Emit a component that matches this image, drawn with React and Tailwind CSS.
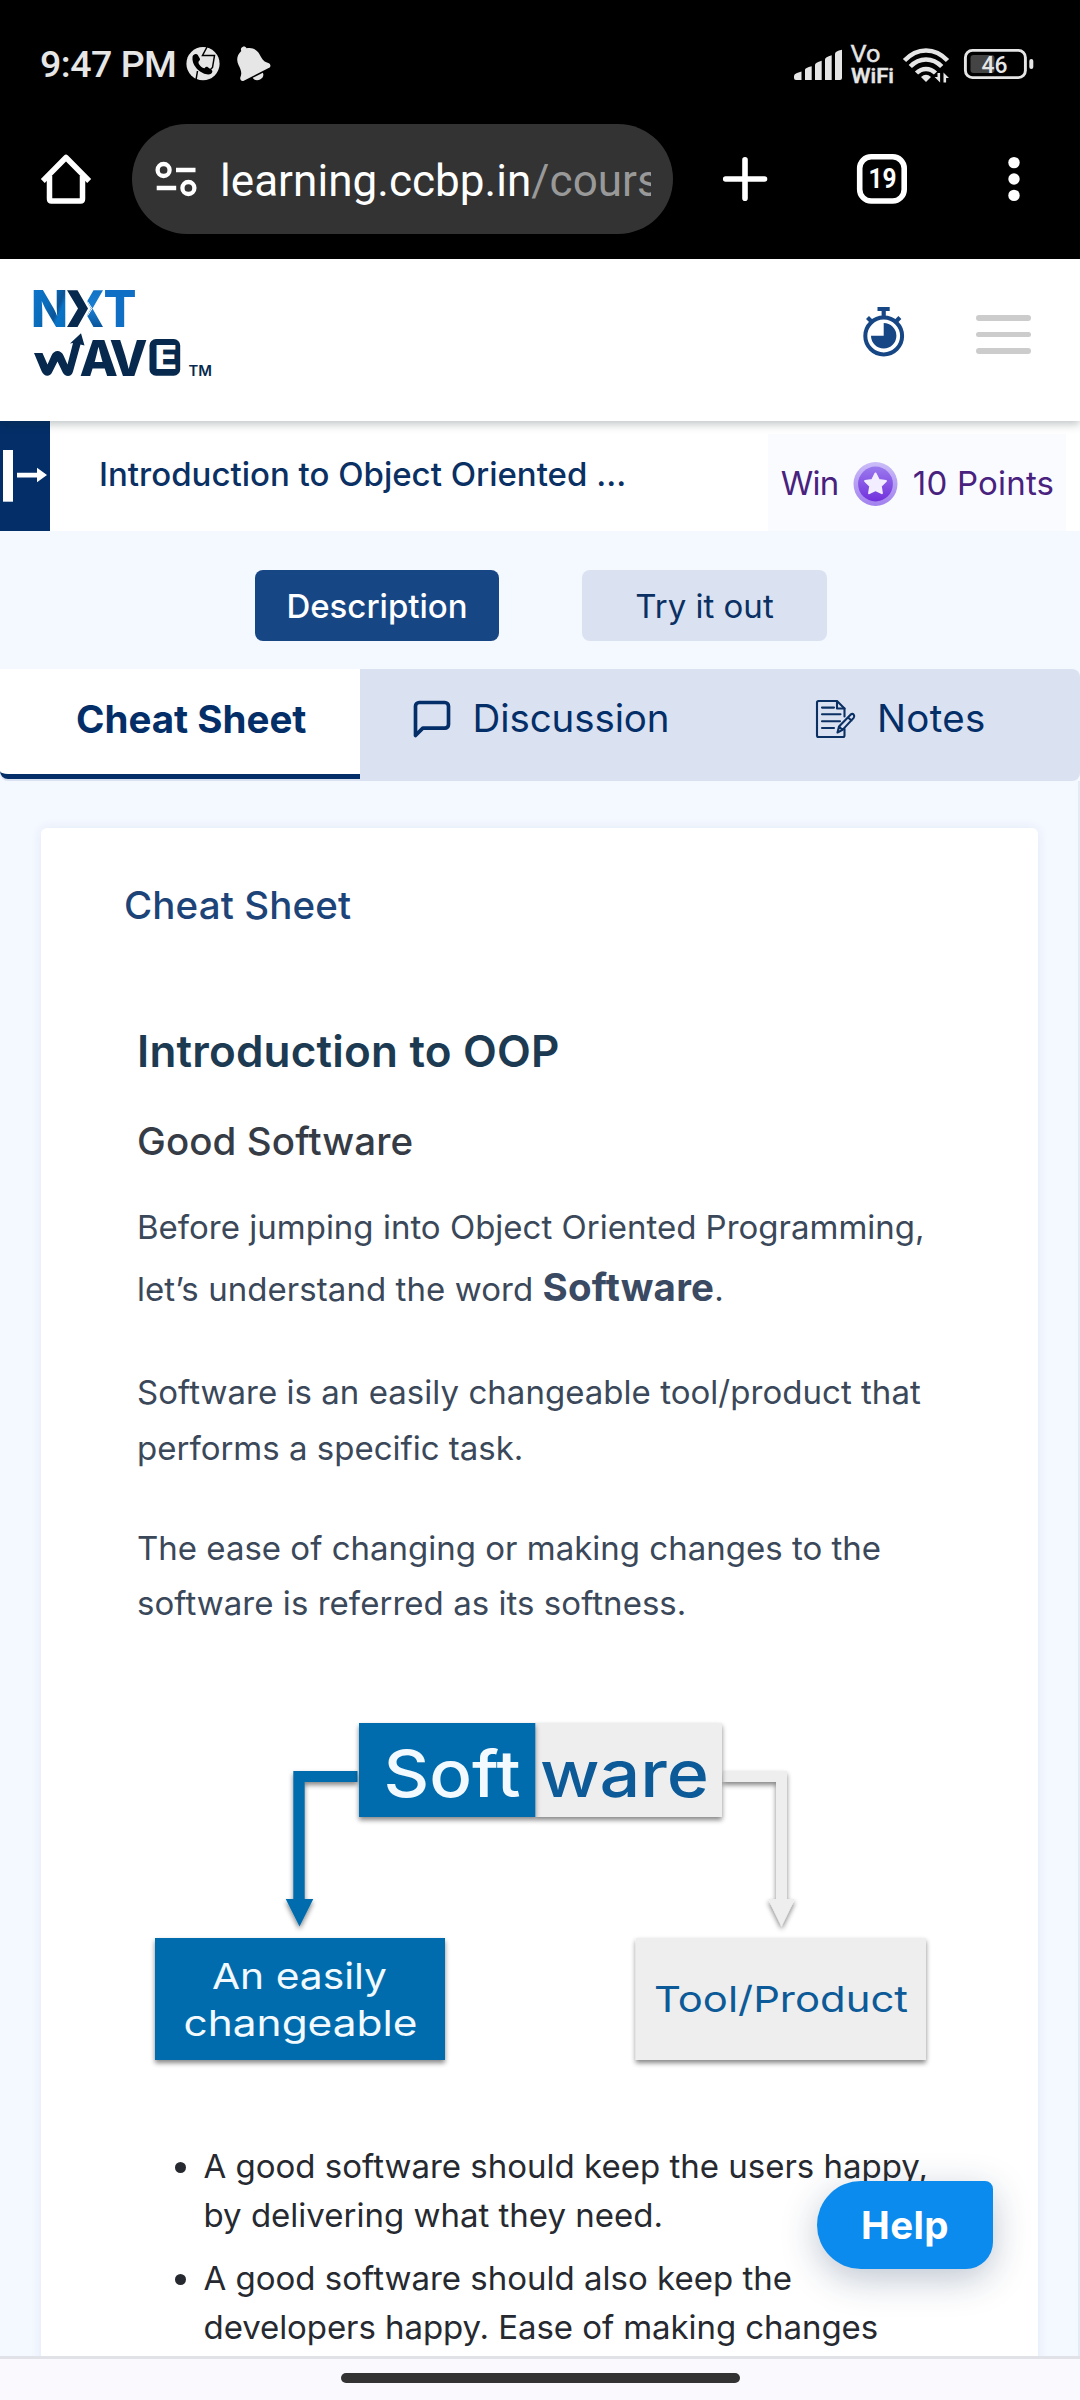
import React from "react";

function StatusBar() {
  return (
    <div className="flex h-[124px] items-start justify-between pt-[38px] pl-[40px] pr-[46px] text-[#e6e6e6]">
      <div className="flex h-[50px] items-center">
        <span className="w-[146px] whitespace-nowrap pt-[2px] text-[37.5px] font-medium leading-[50px] tracking-[-0.5px]">9:47 PM</span>
        <svg width="90" height="50" viewBox="186 38 90 50">
          <circle cx="203" cy="63.700" r="16.600" fill="#e6e6e6" />
          <path d="M207 47l-4.500 8.500h12l-2 12-3.500 3.500" fill="none" stroke="#000" strokeWidth="1.500" />
          <path d="M197.500 71l-1.500 9" stroke="#000" strokeWidth="1.500" />
          <path d="M193.500 55c1.500-1.500 3.500-1.300 4.300 0l2 3.600c.6 1.200-.1 2-1.300 3.200-.5 2.500 3.200 6.300 6 6.500 1.300-1.500 2.200-1.800 3.400-1l3.700 2.600c1.200 1 1 2.600-.5 3.800-5.500 3.500-19.500-5.500-18.600-16.200 0-1 .2-1.800 1-2.500z" fill="#000" />
          <g transform="translate(251 63.500) rotate(-27) scale(.98)" fill="#e6e6e6">
            <path d="M0-19c1.900 0 3 1.300 3 3.100C8.600-14.500 12-10 12-4.500c0 7 1 9.500 4 12 1.800 1.700 1 4.800-1.500 4.800h-29c-2.500 0-3.300-3.100-1.500-4.800 3-2.500 4-5 4-12 0-5.500 3.400-10 9-11.400C-3-17.700-1.900-19 0-19z" />
            <path d="M-5 13.800H6.500c0 3-2.500 5-5.700 5S-5 16.800-5 13.800z" />
          </g>
        </svg>
      </div>
      <svg className="overflow-visible" width="242" height="50" viewBox="792 38 242 50" fill="#e6e6e6">
        <path d="M794 76q0-2 3-3l4.500-1.500V80H796q-2 0-2-2zM805 69.700q0-2 6.700-3.500V80H805zM815 65q0-2.500 6.700-4.200V80H815zM825 59.500q0-2.500 6.700-4.200V80H825zM835 54q0-3 7-4.200V78q0 2-2 2h-5z" />
        <text x="850.500" y="62" fontSize="23.500" fontWeight="400" textLength="30" lengthAdjust="spacingAndGlyphs" stroke="#e6e6e6" strokeWidth=".4">Vo</text>
        <text x="851" y="83" fontSize="21" fontWeight="500" textLength="43" lengthAdjust="spacingAndGlyphs" stroke="#e6e6e6" strokeWidth=".5">WiFi</text>
        <g fill="none" stroke="#e6e6e6" strokeWidth="4.500">
          <path d="M904.500 60.500c12.500-13.500 30.500-13.500 43 0" />
          <path d="M910.300 66.500c9-9.500 22.400-9.500 31.400 0" />
          <path d="M916.500 73c5.500-5.500 13.500-5.500 19 0" />
        </g>
        <path d="M921 77q5-4.500 10 0l-5 5z" />
        <path d="M937.500 73h2.600v9.500l-5.500-5.500h2.900zM943.500 82.500h2.600V78h2.900l-5.500-5.500z" />
        <rect x="965.400" y="50.400" width="60" height="27.200" rx="7" fill="none" stroke="#e6e6e6" strokeWidth="2.900" />
        <rect x="970.500" y="55" width="24" height="18" rx="3" fill="#444" />
        <rect x="1029.300" y="59" width="4" height="10" rx="2" />
        <text x="981.500" y="73" fontSize="23.500" fontWeight="500" textLength="26" lengthAdjust="spacingAndGlyphs">46</text>
      </svg>
    </div>
  );
}

function BrowserBar() {
  return (
    <div className="flex h-[135px] items-start">
      <svg className="mt-[20px] ml-[36px]" width="60" height="70" viewBox="36 144 60 70" fill="none" stroke="#fff" strokeWidth="5.500" strokeLinejoin="round">
        <path d="M42.800 181l23.200-23.500L89.200 181" />
        <path d="M49.500 176v22.900q0 2 2 2h29q2 0 2-2V176" />
      </svg>
      <div className="ml-[36px] flex h-[110px] w-[541px] items-center rounded-full bg-[#333] pl-[22px]">
        <svg width="46" height="44" viewBox="154 157 46 44" fill="none" stroke="#fff" strokeWidth="4.300">
          <circle cx="163.600" cy="170" r="6" />
          <path d="M176 170h19.500M156.700 188h19.500" />
          <circle cx="188.400" cy="188" r="6" />
        </svg>
        <div className="ml-[20px] mt-[3px] w-[431px] overflow-hidden whitespace-nowrap text-[44px] leading-[60px] tracking-[0.05px] text-white">
          learning.ccbp.in<span className="text-[#999]">/course</span>
        </div>
      </div>
      <svg className="ml-[40px]" width="326" height="110" viewBox="713 124 326 110">
        <path d="M745 159.800v38.400M725.700 179H764.500" stroke="#fff" strokeWidth="5.600" strokeLinecap="round" />
        <rect x="859.700" y="156.800" width="44.500" height="44.200" rx="11.500" fill="none" stroke="#fff" strokeWidth="5.600" />
        <text x="868.500" y="187.700" fontSize="27" fontWeight="700" fill="#fff" textLength="28" lengthAdjust="spacingAndGlyphs">19</text>
        <g fill="#fff">
          <circle cx="1014" cy="162.600" r="5.700" />
          <circle cx="1014" cy="179" r="5.700" />
          <circle cx="1014" cy="195.400" r="5.700" />
        </g>
      </svg>
    </div>
  );
}

function Logo() {
  return (
    <svg width="184" height="100" viewBox="32 283 184 100" className="overflow-visible font-[Inter]">
      <defs>
        <linearGradient id="n" x1="0" y1=".2" x2="1" y2=".9">
          <stop offset="0" stopColor="#0f76cd" />
          <stop offset=".4" stopColor="#0a6cba" />
          <stop offset=".62" stopColor="#0b5396" />
          <stop offset=".7" stopColor="#0873c6" />
          <stop offset="1" stopColor="#0a6cba" />
        </linearGradient>
        <linearGradient id="x" x1="0" y1="0" x2="0" y2="1">
          <stop offset="0" stopColor="#1173c6" />
          <stop offset=".5" stopColor="#1a7fd2" />
          <stop offset="1" stopColor="#0a559b" />
        </linearGradient>
      </defs>
      <text x="31" y="327" fontSize="50.500" fontWeight="800" fill="url(#n)" textLength="37" lengthAdjust="spacingAndGlyphs">N</text>
      <path d="M67 290.200h10.500L88 308.600l-10.500 18.400H67l11-18.400z" fill="#06294d" />
      <path d="M93.500 290.200H103l-10.500 18.400L103 327h-9.500L87 315.600l4-7-4-7z" fill="url(#x)" />
      <path d="M87.500 301.500l4.500 7.100-4.500 7.100" fill="none" stroke="#fff" strokeWidth="1" />
      <text x="103.500" y="327" fontSize="50.500" fontWeight="800" fill="#0e6fc4" textLength="33" lengthAdjust="spacingAndGlyphs">T</text>
      <path d="M34 353h8.500l5 11.500 4-9c2.500-6 9.500-6 12 0l4 9 5.500-21.500-3 .5 11-10.200 3.500 12.200-4-1-7.500 27c-1.500 6-8 6-10.500.5l-5-10.500-5 10c-2.500 6-8.500 5.500-11-.5z" fill="#06294d" />
      <text x="79.500" y="375.500" fontSize="50" fontWeight="800" fill="#06294d" textLength="38.500" lengthAdjust="spacingAndGlyphs">A</text>
      <text x="109.500" y="375.500" fontSize="50" fontWeight="800" fill="#06294d" textLength="38" lengthAdjust="spacingAndGlyphs">V</text>
      <rect x="149.500" y="339" width="30.700" height="36.700" rx="6.500" fill="#06294d" />
      <text x="154.500" y="369" fontSize="32" fontWeight="800" fill="#fff" textLength="22.500" lengthAdjust="spacingAndGlyphs">E</text>
      <text x="188.500" y="375.500" fontSize="14.300" fontWeight="600" fill="#06294d" textLength="23.500" lengthAdjust="spacingAndGlyphs">TM</text>
    </svg>
  );
}

function SiteHeader() {
  return (
    <header className="relative z-10 flex h-[162px] items-start bg-white shadow-[0_3px_9px_rgba(20,40,40,0.28)]">
      <div className="ml-[32px] mt-[24px]">
        <Logo />
      </div>
      <svg className="ml-auto mr-[69px] mt-[44px]" width="46" height="58" viewBox="861 303 46 58">
        <circle cx="883.700" cy="336" r="18.400" fill="none" stroke="#174685" strokeWidth="4" />
        <path d="M883.700 323a12.700 12.700 0 1 1-12.700 12.700h12.700z" fill="#174685" />
        <path d="M877.500 309h12.200M883.700 309v8M867.500 317.500l4.500 4.500M899.900 317.500l-4.500 4.500" fill="none" stroke="#174685" strokeWidth="4.200" />
      </svg>
      <div className="mr-[49px] mt-[56px] flex w-[55px] flex-col gap-[11px]">
        <div className="h-[5.500px] rounded-full bg-[#ccc]" />
        <div className="h-[5.500px] rounded-full bg-[#ccc]" />
        <div className="h-[5.500px] rounded-full bg-[#ccc]" />
      </div>
    </header>
  );
}

function StarBadge() {
  return (
    <svg className="mx-[15px]" width="45" height="46" viewBox="-22.500 -23 45 46">
      <defs>
        <linearGradient id="ring" x1="0" y1="0" x2="0" y2="1">
          <stop offset="0" stopColor="#cbbdf8" />
          <stop offset="1" stopColor="#a281ee" />
        </linearGradient>
        <linearGradient id="core" x1="0" y1="0" x2="0" y2="1">
          <stop offset="0" stopColor="#9a79ee" />
          <stop offset="1" stopColor="#7230dc" />
        </linearGradient>
      </defs>
      <circle r="22" fill="url(#ring)" />
      <circle r="17.400" fill="url(#core)" />
      <path d="M0-10.500l3.300 6.400 7.100 1.100-5.100 5.100 1.100 7.100L0 6l-6.400 3.200 1.100-7.100-5.100-5.100 7.100-1.100z" fill="#f3eeff" stroke="#f3eeff" strokeWidth="2" strokeLinejoin="round" />
    </svg>
  );
}

function LessonBar() {
  return (
    <div className="flex h-[110px] bg-white">
      <div className="w-[50px] shrink-0 bg-[#032e68]">
        <svg width="50" height="110" viewBox="0 421 50 110" fill="#fff">
          <rect x="3" y="450" width="10" height="51.700" />
          <path d="M17 472.700h20v-4.900l10 7.200-10 7.200v-4.700H17z" />
        </svg>
      </div>
      <div className="ml-[49px] mt-[29px] w-[560px] whitespace-nowrap text-[33px] font-medium leading-[49px] text-[#0b3063]">
        Introduction to Object Oriented ...
      </div>
      <div className="ml-auto mr-[14px] mt-[13px] flex h-[97px] w-[298px] items-center justify-center bg-[#fafbff] pl-[1px] pt-[2px] text-[33px] leading-[49px] text-[#48227e]">
        <span className="w-[57px] tracking-[-0.8px]">Win</span>
        <StarBadge />
        <span className="whitespace-nowrap tracking-[0.2px]">10 Points</span>
      </div>
    </div>
  );
}

function ModeButtons() {
  return (
    <div className="flex h-[138px] items-start pl-[255px] gap-[83px] pt-[39px] text-[33px] leading-[70px]">
      <button className="h-[71px] w-[244px] rounded-lg bg-[#174685] font-medium text-white">Description</button>
      <button className="h-[71px] w-[245px] rounded-lg bg-[#dae1f0] text-[#0b3063]">Try it out</button>
    </div>
  );
}

function NotesIcon() {
  return (
    <svg width="42" height="44" viewBox="815 703 42 44" fill="none" stroke="#0b3063" strokeWidth="2.100" strokeLinejoin="round" strokeLinecap="round">
      <path d="M844.500 734v6.500q0 1.500-1.500 1.500h-24.500q-1.500 0-1.500-1.500v-33q0-1.500 1.500-1.500h18.500l7.500 7.500v8" />
      <path d="M837 706.500v7h7.500" />
      <path d="M822 712.600h12M822 719.300h18.500M822 726.300h18M822 733h12" />
      <path d="M837.500 737.500l1.500-6 11.500-11.800q2-1.500 3.200 0 1.200 1.500 0 3.200l-11.200 12zM839 731.500l3.500 3.500M848 722.500l3.500 3" />
    </svg>
  );
}

function Tabs() {
  return (
    <div className="flex h-[112px] overflow-hidden rounded-r-lg rounded-bl-lg bg-[#dae1f0] text-[38.5px] leading-[58px] text-[#032e68]">
      <div className="h-[110px] w-[360px] rounded-bl-lg border-b-[5px] border-[#032e68] bg-white pl-[76px] pt-[21px] font-bold">Cheat Sheet</div>
      <div className="flex w-[360px] items-start pl-[50px] pt-[20px]">
        <svg className="mt-[8px]" width="44" height="44" viewBox="0 0 24 24" fill="none" stroke="currentColor" strokeWidth="2" strokeLinecap="round" strokeLinejoin="round">
          <path d="M21 15a2 2 0 0 1-2 2H7l-4 4V5a2 2 0 0 1 2-2h14a2 2 0 0 1 2 2z" />
        </svg>
        <span className="ml-[18.500px] tracking-[-0.1px]">Discussion</span>
      </div>
      <div className="flex w-[360px] items-start pl-[95px] pt-[20px]">
        <div className="mt-[9px]">
          <NotesIcon />
        </div>
        <span className="ml-[20px] tracking-[0.3px]">Notes</span>
      </div>
    </div>
  );
}

function SoftwareDiagram() {
  return (
    <svg className="-ml-px mt-[68px] block" width="820" height="380" viewBox="136 1700 820 380">
      <defs>
        <filter id="drop" x="-10%" y="-10%" width="120%" height="130%">
          <feDropShadow dx="0" dy="3" stdDeviation="2.800" floodColor="#000" floodOpacity=".48" />
        </filter>
      </defs>
      <path d="M357.500 1771H293.300V1899H285.700L299.500 1926.500 313.300 1899H304.700V1782H357.500z" fill="#026cad" filter="url(#drop)" />
      <path d="M722.700 1771H787V1899H795L781.500 1926.500 768 1899H776V1782H722.700z" fill="#eee" filter="url(#drop)" />
      <rect x="535" y="1723" width="187" height="94" fill="#eee" filter="url(#drop)" />
      <rect x="359" y="1723" width="176.300" height="94" fill="#026cad" filter="url(#drop)" />
      <rect x="155" y="1938" width="290" height="122" fill="#026cad" filter="url(#drop)" />
      <rect x="635.700" y="1938" width="290.300" height="122" fill="#eee" filter="url(#drop)" />
      <text x="383.500" y="1797.300" fontSize="65" fontWeight="500" fill="#f2faff" textLength="137" lengthAdjust="spacingAndGlyphs">Soft</text>
      <text x="540" y="1797.300" fontSize="65" fontWeight="500" fill="#0d5a98" textLength="169" lengthAdjust="spacingAndGlyphs">ware</text>
      <text x="212" y="1989.300" fontSize="36" fill="#f2faff" textLength="175" lengthAdjust="spacingAndGlyphs">An easily</text>
      <text x="183.500" y="2036" fontSize="36" fill="#f2faff" textLength="234" lengthAdjust="spacingAndGlyphs">changeable</text>
      <text x="654" y="2012.300" fontSize="36" fill="#0d5a98" textLength="254" lengthAdjust="spacingAndGlyphs">Tool/Product</text>
    </svg>
  );
}

function Bullet({ children }) {
  return (
    <li className="flex">
      <span className="mr-[18px] mt-[20.500px] size-[10.500px] shrink-0 rounded-full bg-[#262a30]" />
      <span className="whitespace-nowrap">{children}</span>
    </li>
  );
}

function CheatSheetCard() {
  return (
    <div className="ml-[41px] mr-[40px] mt-[47px] h-[1570px] rounded-md bg-white pt-[48px] shadow-[0_0_12px_rgba(30,60,140,0.08)]">
      <div className="pl-[83px] text-[38.5px] font-medium leading-[58px] tracking-[0.1px] text-[#1d4478]">Cheat Sheet</div>
      <div className="pl-[96px]">
        <h1 className="mt-[84px] text-[44px] font-semibold leading-[66px] tracking-[0.2px] text-[#1c3b52]">Introduction to OOP</h1>
        <h2 className="mt-[28px] text-[38.5px] font-medium leading-[58px] tracking-[0.1px] text-[#363c46]">Good Software</h2>
        <div className="mt-[30px] flex flex-col gap-[45px] whitespace-nowrap text-[33px] leading-[1.68] text-[#3a485a]">
          <p>
            Before jumping into Object Oriented Programming,
            <br />
            <span className="tracking-[0.06px]">let’s understand the word</span>{" "}
            <strong className="text-[38.5px] font-bold tracking-[0.2px] text-[#3a4a62]">Software</strong>.
          </p>
          <p>
            <span className="tracking-[0.03px]">Software is an easily changeable tool/product that</span>
            <br />
            performs a specific task.
          </p>
          <p>
            The ease of changing or making changes to the
            <br />
            <span className="tracking-[0.04px]">software is referred as its softness.</span>
          </p>
        </div>
        <SoftwareDiagram />
        <ul className="ml-[38px] mt-[62px] flex flex-col gap-[13px] text-[33px] leading-[49.5px] text-[#262a30]">
          <Bullet>
            A good software should keep the users happy,
            <br />
            by delivering what they need.
          </Bullet>
          <Bullet>
            A good software should also keep the
            <br />
            <span className="tracking-[-0.07px]">developers happy. Ease of making changes</span>
          </Bullet>
        </ul>
      </div>
    </div>
  );
}

export default function App() {
  return (
    <div className="relative flex h-[2400px] w-[1080px] flex-col overflow-hidden bg-[#f4f8ff] font-[Inter,sans-serif]">
      <div className="h-[259px] shrink-0 bg-black font-[Roboto,sans-serif]">
        <StatusBar />
        <BrowserBar />
      </div>
      <div className="h-[2097px] shrink-0 overflow-hidden">
        <SiteHeader />
        <LessonBar />
        <ModeButtons />
        <Tabs />
        <div className="h-[1575px] overflow-hidden border-r-2 border-[#e3ebf7]">
          <CheatSheetCard />
        </div>
      </div>
      <div className="flex h-[44px] shrink-0 items-start justify-center border-t-[3px] border-[#e1e1e8] bg-[#f9f9fe] pt-[14px]">
        <div className="h-[10px] w-[399px] rounded-full bg-[#333]" />
      </div>
      <button className="absolute left-[817px] top-[2181px] h-[88px] w-[176px] rounded-[44px_8px_27px_44px] bg-[#0b8bee] text-[38.5px] font-bold leading-[84px] tracking-[0.4px] text-white shadow-[0_10px_36px_rgba(20,50,90,0.28)]">
        Help
      </button>
    </div>
  );
}
